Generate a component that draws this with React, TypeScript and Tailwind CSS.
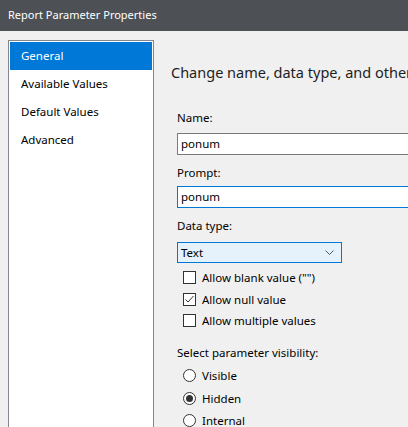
import React from "react";

const navItems = ["General", "Available Values", "Default Values", "Advanced"];

const CheckBox = ({ checked, label }: { checked?: boolean; label: string }) => (
  <div className="flex h-[21.5px] items-center">
    <span className="ml-[6px] flex h-[13px] w-[13px] items-center justify-center border border-[#333] bg-white">
      {checked && (
        <svg width="11" height="11" viewBox="0 0 11 11">
          <polyline points="1.5,5.5 4,8 9.5,2" fill="none" stroke="#333" strokeWidth="1" />
        </svg>
      )}
    </span>
    <span className="ml-[6px]">{label}</span>
  </div>
);

const Radio = ({ checked, label }: { checked?: boolean; label: string }) => (
  <div className="flex h-[22.5px] items-center">
    <span className="ml-[6px] flex h-[13px] w-[13px] items-center justify-center rounded-full border border-[#333] bg-white">
      {checked && <span className="h-[7px] w-[7px] rounded-full bg-[#333]" />}
    </span>
    <span className="ml-[6px]">{label}</span>
  </div>
);

export default function App() {
  return (
    <div
      className="h-[427px] w-[408px] overflow-hidden bg-[#f0f0f0] text-[11.5px] text-black"
      style={{ fontFamily: '"Noto Sans", "Open Sans", sans-serif' }}
    >
      {/* Title bar */}
      <div className="flex h-[31px] items-center bg-[#4d5156] pl-[8px] text-[11px] text-white">
        Report Parameter Properties
      </div>

      <div className="flex pl-[8px] pt-[9px]">
        {/* Left nav list */}
        <div className="h-[400px] w-[146px] shrink-0 border border-[#828790] bg-white p-[1px]">
          {navItems.map((item, i) => (
            <div
              key={item}
              className={
                "flex h-[28px] items-center pl-[11px] " +
                (i === 0 ? "bg-[#0078d7] text-white" : "text-black")
              }
            >
              {item}
            </div>
          ))}
        </div>

        {/* Right content */}
        <div className="min-w-0 flex-1 pl-[17px]">
          <div className="mt-[22px] h-[20px] whitespace-nowrap text-[14.5px] leading-[20px] text-[#1e1e1e]">
            Change name, data type, and other options.
          </div>

          <div className="pl-[6px]">
            <div className="mt-[28px] h-[16px] leading-[16px]">Name:</div>
            <div className="mt-[7px] flex h-[22px] w-[300px] items-center border border-[#7a7a7a] bg-white pl-[3px]">
              ponum
            </div>

            <div className="mt-[10px] h-[16px] leading-[16px]">Prompt:</div>
            <div className="mt-[5px] flex h-[22px] w-[300px] items-center border border-[#0078d7] bg-white pl-[3px]">
              ponum
            </div>

            <div className="mt-[10px] h-[16px] leading-[16px]">Data type:</div>
            <div className="mt-[8px] flex h-[21px] w-[165px] items-center justify-between border border-[#0078d7] bg-[#e5f1fb] pl-[3px] pr-[7px]">
              <span>Text</span>
              <svg width="9" height="5" viewBox="0 0 9 5">
                <polyline points="0.5,0.5 4.5,4.5 8.5,0.5" fill="none" stroke="#555" strokeWidth="1" />
              </svg>
            </div>

            <div className="mt-[4px]">
              <CheckBox label={'Allow blank value ("")'} />
              <CheckBox checked label="Allow null value" />
              <CheckBox label="Allow multiple values" />
            </div>

            <div className="mt-[13px] h-[16px] leading-[16px]">Select parameter visibility:</div>
            <div className="mt-[4px]">
              <Radio label="Visible" />
              <Radio checked label="Hidden" />
              <Radio label="Internal" />
            </div>
          </div>
        </div>
      </div>
    </div>
  );
}
